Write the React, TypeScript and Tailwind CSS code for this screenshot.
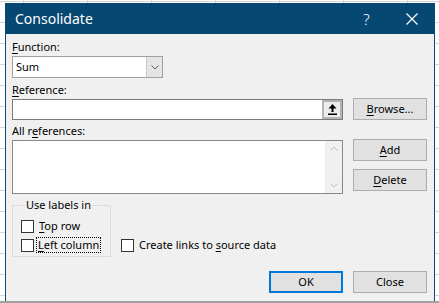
import React from 'react';

function Acc({ k }: { k: string }) {
  return <span className="underline underline-offset-[2px] decoration-[1px]">{k}</span>;
}

function Btn({ children, primary }: { children: React.ReactNode; primary?: boolean }) {
  return (
    <button
      className={
        primary
          ? 'w-[74px] h-[22px] bg-[#e1e1e1] border-2 border-[#0078d7] text-black flex items-center justify-center'
          : 'w-[74px] h-[22px] bg-[#e1e1e1] border border-[#adadad] text-black flex items-center justify-center'
      }
    >
      {children}
    </button>
  );
}

function Check() {
  return <span className="w-[13px] h-[13px] border border-[#333333] bg-white shrink-0" />;
}

export default function App() {
  return (
    <div className="w-[439px] h-[303px] overflow-hidden flex flex-col bg-white bg-[linear-gradient(to_right,#d4d4d4_1px,transparent_1px),linear-gradient(to_bottom,#d4d4d4_1px,transparent_1px)] bg-[size:64px_21px] bg-[position:23px_1px] font-['Noto_Sans',sans-serif] text-[11px] leading-[16px] text-black">
      <div className="mt-[3px] ml-[5px] w-[430px] h-[298px] flex flex-col border-x border-[#0b4a74] shrink-0">
        {/* title bar */}
        <div className="h-[31px] bg-[#074873] flex items-center shrink-0">
          <span className="pl-[9px] text-white text-[14px]">Consolidate</span>
          <span className="ml-auto w-[45px] text-center text-white text-[15px] font-light">?</span>
          <span className="w-[45px] flex items-center justify-center">
            <svg width="12" height="12" viewBox="0 0 12 12">
              <path d="M0.5 0.5 L11.5 11.5 M11.5 0.5 L0.5 11.5" stroke="white" strokeWidth="1.2" />
            </svg>
          </span>
        </div>

        {/* body */}
        <div className="flex-1 bg-[#f0f0f0] pl-[6px] pr-[7px] pt-[5px] flex flex-col">
          <div>
            <Acc k="F" />unction:
          </div>
          <div className="mt-[1px] w-[151px] h-[22px] border border-[#a0a0a0] bg-white flex">
            <span className="flex-1 pl-[3px] flex items-center">Sum</span>
            <span className="w-[16px] bg-[#e5e5e5] border-l border-[#c8c8c8] flex items-center justify-center">
              <svg width="8" height="5" viewBox="0 0 8 5">
                <polyline points="0.5,0.5 4,4 7.5,0.5" fill="none" stroke="#606060" strokeWidth="1" />
              </svg>
            </span>
          </div>

          <div className="mt-[4px]">
            <Acc k="R" />eference:
          </div>
          <div className="flex items-center gap-[10px] h-[22px]">
            <div className="w-[331px] h-[21px] border border-[#7a7a7a] bg-white flex justify-end">
              <span className="w-[20px] h-[19px] border-2 border-[#b4b4b4] bg-[#ececec] flex items-center justify-center">
                <svg width="9" height="11" viewBox="0 0 9 11">
                  <path d="M4.5 0 L8.5 4.5 L5.5 4.5 L5.5 8 L3.5 8 L3.5 4.5 L0.5 4.5 Z" fill="black" />
                  <rect x="0" y="9.5" width="9" height="1.5" fill="black" />
                </svg>
              </span>
            </div>
            <Btn>
              <Acc k="B" />rowse...
            </Btn>
          </div>

          <div className="mt-[3px]">
            All r<Acc k="e" />ferences:
          </div>
          <div className="flex items-start gap-[10px]">
            <div className="mt-[1px] w-[331px] h-[54px] border border-[#828790] bg-white flex justify-end">
              <span className="w-[17px] bg-[#f0f0f0] flex flex-col items-center justify-between py-[5px]">
                <svg width="8" height="5" viewBox="0 0 8 5">
                  <polyline points="0.5,4.5 4,1 7.5,4.5" fill="none" stroke="#c0c0c0" strokeWidth="1" />
                </svg>
                <svg width="8" height="5" viewBox="0 0 8 5">
                  <polyline points="0.5,0.5 4,4 7.5,0.5" fill="none" stroke="#c0c0c0" strokeWidth="1" />
                </svg>
              </span>
            </div>
            <div className="flex flex-col gap-[8px]">
              <Btn>
                <Acc k="A" />dd
              </Btn>
              <Btn>
                <Acc k="D" />elete
              </Btn>
            </div>
          </div>

          <div className="mt-[3px] flex items-end gap-[10px]">
            <fieldset className="w-[99px] border border-[#dcdcdc] pl-[8px] pb-[2px]">
              <legend className="ml-[4px] px-[1px]">Use labels in</legend>
              <div className="mt-[4px] h-[18px] flex items-center gap-[5px]">
                <Check />
                <span>
                  <Acc k="T" />op row
                </span>
              </div>
              <div className="mt-[1px] h-[18px] flex items-center gap-[2px]">
                <Check />
                <span className="border border-dotted border-black px-[1px] leading-[14px]">
                  <Acc k="L" />eft column
                </span>
              </div>
            </fieldset>
            <div className="mb-[3px] h-[18px] flex items-center gap-[5px]">
              <Check />
              <span>
                Create links to <Acc k="s" />ource data
              </span>
            </div>
          </div>

          <div className="mt-[14px] flex justify-end gap-[10px]">
            <Btn primary>OK</Btn>
            <Btn>Close</Btn>
          </div>
        </div>
      </div>
      <div className="h-[2px] bg-[#a0a0a0] shrink-0" />
    </div>
  );
}
